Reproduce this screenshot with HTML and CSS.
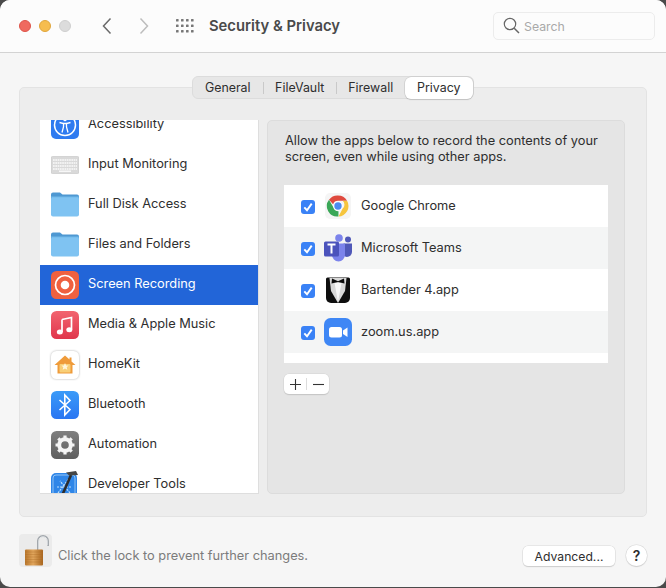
FILE: index.html
```html
<!DOCTYPE html>
<html lang="en">
<head>
<meta charset="utf-8">
<title>Security &amp; Privacy</title>
<link rel="stylesheet" href="styles.css">
</head>
<body>
<div class="window">
  <header class="titlebar">
    <div class="lights"><span class="light red"></span><span class="light yellow"></span><span class="light grey"></span></div>
    <svg class="nav back" width="12" height="18" viewBox="0 0 12 18"><path d="M9.500 1.500 2.500 9l7 7.500" fill="none" stroke="#6a6a6a" stroke-width="1.500"/></svg>
    <svg class="nav forward" width="12" height="18" viewBox="0 0 12 18"><path d="M2.500 1.500 9.500 9l-7 7.500" fill="none" stroke="#bdbdbd" stroke-width="1.500"/></svg>
    <svg class="grid" width="18" height="14" viewBox="0 0 18 14" fill="#777"><rect x="0" y="0" width="2.600" height="2.600" rx=".6"/><rect x="5" y="0" width="2.600" height="2.600" rx=".6"/><rect x="10" y="0" width="2.600" height="2.600" rx=".6"/><rect x="15" y="0" width="2.600" height="2.600" rx=".6"/><rect x="0" y="5.500" width="2.600" height="2.600" rx=".6"/><rect x="5" y="5.500" width="2.600" height="2.600" rx=".6"/><rect x="10" y="5.500" width="2.600" height="2.600" rx=".6"/><rect x="15" y="5.500" width="2.600" height="2.600" rx=".6"/><rect x="0" y="11" width="2.600" height="2.600" rx=".6"/><rect x="5" y="11" width="2.600" height="2.600" rx=".6"/><rect x="10" y="11" width="2.600" height="2.600" rx=".6"/><rect x="15" y="11" width="2.600" height="2.600" rx=".6"/></svg>
    <h1 class="title">Security &amp; Privacy</h1>
    <div class="search">
      <svg width="17" height="17" viewBox="0 0 17 17"><circle cx="7" cy="7" r="5.700" fill="none" stroke="#666" stroke-width="1.200"/><path d="M11.200 11.200 16 16" stroke="#666" stroke-width="1.500"/></svg>
      <span class="search-text">Search</span>
    </div>
  </header>

  <main class="content">
    <nav class="tabs">
      <span class="tab t-general">General</span><i class="sep"></i>
      <span class="tab t-filevault">FileVault</span><i class="sep"></i>
      <span class="tab t-firewall">Firewall</span>
      <span class="tab t-privacy">Privacy</span>
    </nav>
    <section class="panel">
      <div class="sidebar">
        <ul class="cats">
          <li class="cat"><svg class="ico" viewBox="0 0 28 28"><rect width="28" height="28" rx="5" fill="#2f7bf0"/><circle cx="14" cy="14" r="10.500" fill="none" stroke="#fff" stroke-width="1.500"/><circle cx="14" cy="8.500" r="1.700" fill="#fff"/><path d="M8.500 11.500 12.500 12.500V16L11 21.500M19.500 11.500 15.500 12.500V16L17 21.500M12.500 12.500h3" fill="none" stroke="#fff" stroke-width="1.300"/></svg><span>Accessibility</span></li>
          <li class="cat"><svg class="ico" viewBox="0 0 28 28"><rect x="0" y="5.500" width="28" height="17" rx="1.500" fill="#d9d9d9" stroke="#c4c4c4" stroke-width=".6"/><path d="M2 9h24M2 12h24M2 15h24M2 18h24" stroke="#fafafa" stroke-width="1.700" stroke-dasharray="1.700 .6"/><path d="M8 20.300h12" stroke="#f7f7f7" stroke-width="1.400"/></svg><span>Input Monitoring</span></li>
          <li class="cat"><svg class="ico" viewBox="0 0 28 28"><path d="M0 3.500a2 2 0 0 1 2-2h7l2.500 2H26a2 2 0 0 1 2 2V11H0Z" fill="#4e98d2"/><rect y="5.500" width="28" height="20" rx="2" fill="#7fc3f2"/><rect x="0" y="5" width="28" height="1.200" fill="#5fa8dd"/></svg><span>Full Disk Access</span></li>
          <li class="cat"><svg class="ico" viewBox="0 0 28 28"><path d="M0 3.500a2 2 0 0 1 2-2h7l2.500 2H26a2 2 0 0 1 2 2V11H0Z" fill="#4e98d2"/><rect y="5.500" width="28" height="20" rx="2" fill="#7fc3f2"/><rect x="0" y="5" width="28" height="1.200" fill="#5fa8dd"/></svg><span>Files and Folders</span></li>
          <li class="cat active"><svg class="ico" viewBox="0 0 28 28"><rect width="28" height="28" rx="5.500" fill="#ef6140"/><circle cx="14" cy="14" r="9.500" fill="none" stroke="#fff" stroke-width="1.700"/><circle cx="14" cy="14" r="4.300" fill="#fff"/></svg><span>Screen Recording</span></li>
          <li class="cat"><svg class="ico" viewBox="0 0 28 28"><defs><linearGradient id="mg" x1="0" y1="0" x2="0" y2="1"><stop offset="0" stop-color="#f2646f"/><stop offset="1" stop-color="#e0364c"/></linearGradient></defs><rect width="28" height="28" rx="5.500" fill="url(#mg)"/><path d="M11 8.500 20.500 6.500V18.500M11 8.500V21" fill="none" stroke="#fff" stroke-width="1.700"/><ellipse cx="8.800" cy="21" rx="3" ry="2.500" fill="#fff"/><ellipse cx="18.300" cy="18.800" rx="3" ry="2.500" fill="#fff"/></svg><span>Media &amp; Apple Music</span></li>
          <li class="cat"><svg class="ico shadow" viewBox="0 0 28 28"><rect width="28" height="28" rx="5.500" fill="#fff"/><path d="M14 4.500 3.500 14H6.500V22.500H21.500V14H24.500L20.500 10.400V6.500H18.500V8.600Z" fill="#ef9b3a"/><rect x="8.500" y="13" width="11" height="8.500" rx="1" fill="#f8cf78"/><path d="m14 12 1.100 2.400 2.500.2-1.900 1.700.6 2.500-2.300-1.300-2.300 1.300.6-2.500-1.900-1.700 2.500-.2Z" fill="#fff6dc"/></svg><span>HomeKit</span></li>
          <li class="cat"><svg class="ico" viewBox="0 0 28 28"><defs><linearGradient id="bg" x1="0" y1="0" x2="0" y2="1"><stop offset="0" stop-color="#3b9bf8"/><stop offset="1" stop-color="#2a76f2"/></linearGradient></defs><rect width="28" height="28" rx="5.500" fill="url(#bg)"/><path d="M8.500 9 19 18.500 13.800 24V4L19 9.500 8.500 19" fill="none" stroke="#fff" stroke-width="1.600"/></svg><span>Bluetooth</span></li>
          <li class="cat"><svg class="ico" viewBox="0 0 28 28"><defs><linearGradient id="gg" x1="0" y1="0" x2="0" y2="1"><stop offset="0" stop-color="#808080"/><stop offset="1" stop-color="#5e5e5e"/></linearGradient></defs><rect width="28" height="28" rx="5.500" fill="url(#gg)"/><circle cx="14" cy="14" r="5.800" fill="none" stroke="#f4f4f4" stroke-width="4"/><path d="M14 4.500v4M14 19.500v4M4.500 14h4M19.500 14h4M7.300 7.300l2.800 2.800M17.900 17.900l2.800 2.800M20.700 7.300l-2.800 2.800M10.100 17.900l-2.800 2.800" stroke="#f4f4f4" stroke-width="3.200"/></svg><span>Automation</span></li>
          <li class="cat"><svg class="ico" viewBox="0 0 28 28"><rect y="2" width="26" height="26" rx="5" fill="#2f86e8"/><rect x="2" y="4" width="22" height="22" rx="3" fill="none" stroke="#a9d3fa" stroke-width=".8"/><path d="M7 22 19 6M19 22 9 10M6 16h15" stroke="#bfe0fc" stroke-width="1.200" fill="none" stroke-dasharray="2 1"/><path d="M10 27 20 4" stroke="#2c2c2c" stroke-width="2.600"/><path d="M15 1.500 25 0l2 4-9 .5Z" fill="#454545"/></svg><span>Developer Tools</span></li>
        </ul>
      </div>

      <div class="detail">
        <p class="desc">Allow the apps below to record the contents of your screen, even while using other apps.</p>
        <ul class="apps">
          <li class="app">
            <span class="check"><svg width="14" height="14" viewBox="0 0 14 14"><path d="M3.300 7.300 6 10.200 10.700 3.600" fill="none" stroke="#fff" stroke-width="1.900"/></svg></span>
            <svg class="ico" viewBox="0 0 28 28"><rect x="1" y="1" width="26" height="26" rx="5" fill="#f5f5f5"/><path d="M14 3.500a10.500 10.500 0 0 1 9.100 5.250H14a5.250 5.250 0 0 0-4.900 3.400L5 7.700A10.500 10.500 0 0 1 14 3.500Z" fill="#df4a3e"/><path d="M23.100 8.750A10.500 10.500 0 0 1 14.500 24.500l4.200-7.900a5.250 5.250 0 0 0 0-7.850Z" fill="#f6c53d"/><path d="M5 7.700l4.300 7.500A5.250 5.250 0 0 0 14.500 19.200l-.1 5.300A10.500 10.500 0 0 1 5 7.700Z" fill="#3aa757"/><circle cx="14" cy="14" r="4.700" fill="#fff"/><circle cx="14" cy="14" r="3.700" fill="#4c8bf0"/></svg>
            <span class="app-name">Google Chrome</span>
          </li>
          <li class="app">
            <span class="check"><svg width="14" height="14" viewBox="0 0 14 14"><path d="M3.300 7.300 6 10.200 10.700 3.600" fill="none" stroke="#fff" stroke-width="1.900"/></svg></span>
            <svg class="ico" viewBox="0 0 28 28"><circle cx="15" cy="4" r="3.800" fill="#7b83eb"/><circle cx="24" cy="5.500" r="3" fill="#4f58b8"/><path d="M19.500 9.500H28V18a5 5 0 0 1-8.500 3.500Z" fill="#4f58b8"/><path d="M8 9.500H21V21a6.500 6.500 0 0 1-13 0Z" fill="#7b83eb"/><rect x="0" y="7.500" width="15" height="15" rx="1.500" fill="#4b53bc"/><path d="M3.500 10.500h8M7.500 10.500v9" stroke="#fff" stroke-width="2"/></svg>
            <span class="app-name">Microsoft Teams</span>
          </li>
          <li class="app">
            <span class="check"><svg width="14" height="14" viewBox="0 0 14 14"><path d="M3.300 7.300 6 10.200 10.700 3.600" fill="none" stroke="#fff" stroke-width="1.900"/></svg></span>
            <svg class="ico" viewBox="0 0 28 28"><path d="M3.500 1.500H24.500A1.500 1.500 0 0 1 26 3V22a5 5 0 0 1-5 5H7a5 5 0 0 1-5-5V3A1.500 1.500 0 0 1 3.500 1.500Z" fill="#0e0e0e"/><path d="M5.500 2H22.500L21 15 14 27 7 15Z" fill="#d8d8d8"/><path d="M10.500 7 14 26 17.500 7Z" fill="#f7f7f7"/><path d="M8 2.500 14 5.300 20 2.500 20.500 7.500 14 6 7.500 7.500Z" fill="#0b0b0b"/></svg>
            <span class="app-name">Bartender 4.app</span>
          </li>
          <li class="app">
            <span class="check"><svg width="14" height="14" viewBox="0 0 14 14"><path d="M3.300 7.300 6 10.200 10.700 3.600" fill="none" stroke="#fff" stroke-width="1.900"/></svg></span>
            <svg class="ico" viewBox="0 0 28 28"><rect width="28" height="28" rx="6.500" fill="#3f87f5"/><rect x="5" y="9" width="13" height="10.500" rx="2.500" fill="#fff"/><path d="M19 12.500 23.500 9.500V19L19 16Z" fill="#fff"/></svg>
            <span class="app-name">zoom.us.app</span>
          </li>
        </ul>
        <div class="addrem">
          <button class="ar" type="button"><svg width="13" height="13" viewBox="0 0 13 13"><path d="M6.500 1v11M1 6.500h11" stroke="#333" stroke-width="1.100"/></svg></button>
          <i class="ar-sep"></i>
          <button class="ar" type="button"><svg width="13" height="13" viewBox="0 0 13 13"><path d="M1 6.500h11" stroke="#333" stroke-width="1.100"/></svg></button>
        </div>
      </div>
    </section>
  </main>

  <footer class="footer">
    <div class="lock">
      <svg width="33" height="33" viewBox="0 0 33 33"><defs><linearGradient id="lk" x1="0" y1="0" x2="1" y2="0"><stop offset="0" stop-color="#b8762c"/><stop offset=".45" stop-color="#e0a55c"/><stop offset="1" stop-color="#a9661f"/></linearGradient></defs><path d="M19 16V7a5 5 0 0 1 10 0v5" fill="none" stroke="#a3a8ad" stroke-width="2"/><path d="M19.700 16V7a4.300 4.300 0 0 1 8.600 0v4.500" fill="none" stroke="#eef0f1" stroke-width=".8"/><rect x="6" y="15.500" width="18" height="16" rx="1" fill="url(#lk)"/><path d="M6 18h18M6 20.500h18M6 23h18M6 25.500h18M6 28h18" stroke="#a9661f" stroke-opacity=".45" stroke-width=".7"/></svg>
    </div>
    <span class="lock-text">Click the lock to prevent further changes.</span>
    <button class="advanced" type="button">Advanced...</button>
    <button class="help" type="button">?</button>
  </footer>
</div>
</body>
</html>
```
FILE: styles.css
```css
* { box-sizing: border-box; }
html, body { margin: 0; padding: 0; }
body {
  width: 666px;
  height: 588px;
  background: #4a4a4a;
  font-family: Inter, "Liberation Sans", sans-serif;
  font-size: 12.8px;
  color: #2e2e2e;
  overflow: hidden;
}
ul { list-style: none; margin: 0; padding: 0; }
p, h1 { margin: 0; }
button { font-family: inherit; padding: 0; border: 0; }

.window {
  width: 666px;
  height: 587px;
  background: #f6f6f6;
  border-radius: 10px;
  overflow: hidden;
  display: flex;
  flex-direction: column;
}

.titlebar {
  height: 53px;
  flex: none;
  background: #fcfcfc;
  border-bottom: 1px solid #d3d3d3;
  display: flex;
  align-items: center;
  padding-left: 19px;
  padding-bottom: 1px;
}
.lights { display: flex; gap: 8px; }
.light { width: 12px; height: 12px; border-radius: 50%; display: block; }
.red { background: #ef6a5f; border: 1px solid #de5449; }
.yellow { background: #f6bd4f; border: 1px solid #e0a63c; }
.grey { background: #dcdcdc; border: 1px solid #cfcfcf; }
.nav { flex: none; }
.back { margin-left: 30px; }
.forward { margin-left: 25px; }
.grid { margin-left: 26px; flex: none; }
.title {
  margin-left: 15px;
  font-size: 14.8px;
  font-weight: 600;
  color: #4a4a4a;
  white-space: nowrap;
}
.search {
  margin-left: auto;
  margin-right: 11px;
  width: 162px;
  height: 28px;
  border: 1px solid #ececec;
  border-radius: 5px;
  display: flex;
  align-items: center;
  gap: 4px;
  padding-left: 9px;
  color: #a9a9a9;
  font-size: 12.3px;
}
.search-text { position: relative; top: 1px; }

.content {
  flex: none;
  padding: 23px 19px 0;
  display: flex;
  flex-direction: column;
}
.tabs {
  align-self: center;
  position: relative;
  z-index: 1;
  width: 282px;
  height: 23px;
  margin-bottom: -12px;
  background: #e7e7e7;
  border: 1px solid #dcdcdc;
  border-radius: 6px;
  display: flex;
  align-items: center;
  color: #2e2e2e;
}
.tab { white-space: nowrap; font-size: 12.4px; line-height: 21px; text-align: center; }
.t-general { width: 70px; }
.t-filevault { width: 73px; }
.t-firewall { width: 68px; }
.sep { width: 1px; height: 12px; background: #c9c9c9; flex: none; }
.t-privacy {
  width: 69px;
  height: 22px;
  background: #fff;
  border-radius: 6px;
  box-shadow: 0 0 0 .5px #c4c4c4, 0 1px 1px rgba(0,0,0,.18);
}

.panel {
  width: 628px;
  height: 430px;
  background: #ededed;
  border: 1px solid #e3e3e3;
  border-radius: 5px;
  padding: 32px 21px 22px 20px;
  display: flex;
  gap: 8px;
}
.sidebar {
  width: 219px;
  height: 374px;
  flex: none;
  background: #fff;
  overflow: hidden;
  border-right: 1px solid #dedede;
  border-bottom: 1px solid #dedede;
}
.cats { margin-top: -15px; }
.cat {
  height: 40px;
  display: flex;
  align-items: center;
  gap: 9px;
  padding-left: 11px;
  white-space: nowrap;
  color: #2e2e2e;
  line-height: 16px;
}
.cat > span { position: relative; top: -1px; }
.cat.active { background: #2265d8; color: #fff; }
.ico { width: 28px; height: 28px; flex: none; display: block; }
.shadow { filter: drop-shadow(0 .5px 1px rgba(0,0,0,.3)); }

.detail {
  width: 358px;
  height: 374px;
  flex: none;
  background: #e5e5e5;
  border: 1px solid #dcdcdc;
  border-radius: 5px;
  padding: 12px 16px 0 16px;
}
.desc {
  line-height: 16px;
  width: 320px;
  color: #2e2e2e;
  margin-left: 1px;
}
.apps {
  margin-top: 20px;
  width: 324px;
  height: 178px;
  background: #fff;
}
.app {
  height: 42px;
  display: flex;
  align-items: center;
  padding-left: 17px;
  color: #2e2e2e;
}
.app:nth-child(even) { background: #f4f5f5; }
.check {
  width: 14px;
  height: 14px;
  background: #3a82f6;
  border-radius: 3px;
  flex: none;
  display: block;
  margin-right: 9px;
  position: relative;
  top: 1px;
}
.check svg { display: block; }
.app-name { margin-left: 9px; position: relative; top: -1px; }
.addrem {
  margin-top: 11px;
  width: 45px;
  height: 20px;
  background: #fff;
  border-radius: 5px;
  box-shadow: 0 0 0 .5px #d4d4d4, 0 1px 1px rgba(0,0,0,.2);
  display: flex;
  align-items: center;
}
.ar { flex: 1; height: 20px; background: none; display: flex; align-items: center; justify-content: center; }
.ar-sep { width: 1px; height: 12px; background: #dcdcdc; }

.footer {
  flex: none;
  padding: 17px 0 0 19px;
  display: flex;
  align-items: flex-start;
}
.lock {
  width: 33px;
  height: 33px;
  background: #ebebeb;
  border-radius: 4px;
  flex: none;
}
.lock svg { display: block; }
.lock-text {
  margin-left: 6px;
  margin-top: 14px;
  color: #7b7b7b;
  line-height: 16px;
  white-space: nowrap;
}
.advanced {
  margin-left: auto;
  margin-top: 12px;
  width: 92px;
  height: 20px;
  background: #fff;
  border-radius: 5px;
  box-shadow: 0 0 0 .5px #d8d8d8, 0 1px 1px rgba(0,0,0,.2);
  color: #2e2e2e;
  font-size: 12.2px;
}
.help {
  margin: 11px 19px 0 11px;
  width: 21px;
  height: 21px;
  border-radius: 50%;
  background: #fff;
  box-shadow: 0 0 0 .5px #d8d8d8, 0 1px 1px rgba(0,0,0,.2);
  color: #2e2e2e;
  font-size: 14px;
  font-weight: 600;
}
```
